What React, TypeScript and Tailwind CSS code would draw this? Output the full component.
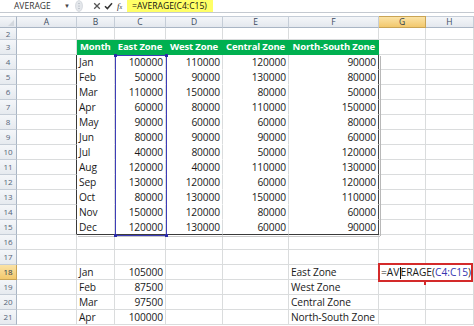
import React from "react";

const COLS = ["A", "B", "C", "D", "E", "F", "G", "H"];

const body: [string, string, string, string, string][] = [
  ["Jan", "100000", "110000", "120000", "90000"],
  ["Feb", "50000", "90000", "130000", "80000"],
  ["Mar", "110000", "150000", "80000", "50000"],
  ["Apr", "60000", "80000", "110000", "150000"],
  ["May", "90000", "60000", "60000", "80000"],
  ["Jun", "80000", "90000", "90000", "60000"],
  ["Jul", "40000", "80000", "50000", "120000"],
  ["Aug", "120000", "40000", "110000", "130000"],
  ["Sep", "130000", "120000", "60000", "120000"],
  ["Oct", "80000", "130000", "150000", "110000"],
  ["Nov", "150000", "120000", "80000", "60000"],
  ["Dec", "120000", "130000", "60000", "90000"],
];

const lower: Record<number, [string, string, string]> = {
  18: ["Jan", "105000", "East Zone"],
  19: ["Feb", "87500", "West Zone"],
  20: ["Mar", "97500", "Central Zone"],
  21: ["Apr", "100000", "North-South Zone"],
};

const headers = ["Month", "East Zone", "West Zone", "Central Zone", "North-South Zone"];

function cellClass(r: number, c: number): string {
  const inBody = r >= 4 && r <= 15 && c >= 2 && c <= 6;
  const isHead = r === 3 && c >= 2 && c <= 6;
  let cls = "flex items-center overflow-visible whitespace-nowrap border-r border-b ";
  if (isHead) {
    cls += "bg-[#00b050] border-r-[#00b050] border-b-[#00b050] text-white font-bold ";
  } else if (inBody) {
    cls += "bg-white border-r-[#dadcdd] ";
    cls += r === 15 ? "border-b-[#3a3a3a] " : "border-b-white ";
  } else {
    cls += "bg-white border-r-[#dadcdd] border-b-[#dadcdd] ";
  }
  if (r >= 4 && r <= 15 && c === 1) cls = cls.replace("border-r-[#dadcdd]", "border-r-[#3a3a3a]");
  if (r >= 4 && r <= 15 && c === 6) cls = cls.replace("border-r-[#dadcdd]", "border-r-[#4a4a4a]");
  return cls;
}

function Cell({ r, c }: { r: number; c: number }) {
  let text: string | null = null;
  let right = false;
  if (r === 3 && c >= 2 && c <= 6) {
    text = headers[c - 2];
  } else if (r >= 4 && r <= 15 && c >= 2 && c <= 6) {
    text = body[r - 4][c - 2];
    right = c !== 2;
  } else if (lower[r]) {
    if (c === 2) text = lower[r][0];
    if (c === 3) {
      text = lower[r][1];
      right = true;
    }
    if (c === 6) text = lower[r][2];
  }
  const base = cellClass(r, c);
  if (r === 3 && text) {
    const pad = c === 2 ? "pl-[3px]" : c === 6 ? "justify-end pr-[3px]" : "justify-center";
    return (
      <div className={base + pad}>
        <span className="text-[9.5px] leading-none tracking-[-0.15px]">{text}</span>
      </div>
    );
  }
  return (
    <div className={base + (right ? "justify-end pr-[2px]" : "pl-[2px]")}>
      {text && <span className="text-[10.2px] leading-none tracking-[-0.1px]">{text}</span>}
    </div>
  );
}

function RowHeader({ n }: { n: number }) {
  const active = n === 18;
  return (
    <div
      className={
        "flex items-center justify-center border-r border-b text-[8px] leading-none " +
        (active
          ? "bg-gradient-to-b from-[#fbe3a6] to-[#f2c86c] border-r-[#c9a455] border-b-[#c9a455] text-[#2c3a4c]"
          : "bg-gradient-to-b from-[#f4f6f9] to-[#e6eaef] border-r-[#a9b5c4] border-b-[#c5cdd7] text-[#546479]")
      }
    >
      {n}
    </div>
  );
}

export default function App() {
  const rows: number[] = [];
  for (let i = 2; i <= 21; i++) rows.push(i);
  return (
    <div
      className="relative w-[474px] h-[326px] overflow-hidden bg-white text-[#1a1a1a]"
      style={{ fontFamily: '"Open Sans", "Liberation Sans", sans-serif' }}
    >
      {/* formula bar */}
      <div className="flex h-[13px] items-stretch border-b border-[#c4c9d0] bg-white">
        <div className="flex w-[74px] items-center pl-[14px] text-[8.5px] leading-none text-[#333]">
          <span>AVERAGE</span>
          <span className="ml-auto mr-[4px] text-[6px] text-[#444]">▼</span>
        </div>
        <div className="flex w-[53px] items-center">
          <svg width="8" height="12" viewBox="0 0 8 12" className="ml-[1px]">
            <ellipse cx="4" cy="6" rx="3.5" ry="5.5" fill="#e4e7eb" stroke="#c9ced5" strokeWidth="0.6" />
            <circle cx="4" cy="3.5" r="0.6" fill="#9aa3ae" />
            <circle cx="4" cy="6" r="0.6" fill="#9aa3ae" />
            <circle cx="4" cy="8.5" r="0.6" fill="#9aa3ae" />
          </svg>
          <svg width="8" height="8" viewBox="0 0 8 8" className="ml-[10px]">
            <path d="M1.2 1.2 L6.8 6.8 M6.8 1.2 L1.2 6.8" stroke="#555" strokeWidth="1.3" />
          </svg>
          <svg width="9" height="8" viewBox="0 0 9 8" className="ml-[3px]">
            <path d="M1 4.2 L3.4 6.6 L8 1.2" stroke="#333" strokeWidth="1.5" fill="none" />
          </svg>
          <span
            className="ml-[4px] text-[9px] italic leading-none text-[#333]"
            style={{ fontFamily: '"Liberation Serif", serif' }}
          >
            f<span className="text-[6px]">x</span>
          </span>
        </div>
        <div className="flex w-[86px] items-center bg-[#ffff66] pl-[5px] text-[8.6px] leading-none text-[#111]">
          =AVERAGE(C4:C15)
        </div>
      </div>
      <div className="h-[3px] bg-white" />

      {/* sheet grid */}
      <div className="grid grid-cols-[17px_60px_38px_51px_57px_66px_90px_47px_48px] grid-rows-[12px_12px_repeat(19,15px)]">
        <div className="relative border-r border-b border-t border-r-[#a9b5c4] border-b-[#a9b5c4] border-t-[#c5cdd7] bg-gradient-to-b from-[#f4f6f9] to-[#e4e8ee]">
          <svg width="6" height="6" viewBox="0 0 6 6" className="absolute bottom-[1px] right-[2px]">
            <path d="M6 0 L6 6 L0 6 Z" fill="#d3d8de" />
          </svg>
        </div>
        {COLS.map((c) => (
          <div
            key={c}
            className={
              "flex items-center justify-center border-r border-b border-t text-[8.5px] leading-none " +
              (c === "G"
                ? "bg-gradient-to-b from-[#fbe3a6] to-[#f2c86c] border-r-[#c9a455] border-b-[#c9a455] border-t-[#c9a455] text-[#2c3a4c]"
                : "bg-gradient-to-b from-[#f4f6f9] to-[#e4e8ee] border-r-[#c5cdd7] border-b-[#a9b5c4] border-t-[#c5cdd7] text-[#3d4b5e]")
            }
          >
            {c}
          </div>
        ))}
        {rows.map((r) => (
          <React.Fragment key={r}>
            <RowHeader n={r} />
            {COLS.map((_, i) => (
              <Cell key={i} r={r} c={i + 1} />
            ))}
          </React.Fragment>
        ))}
      </div>

      {/* table right / bottom shadow */}
      <div className="pointer-events-none absolute left-[380px] top-[56px] h-[180px] w-[1px] bg-[#b8b8b8]" />
      <div className="pointer-events-none absolute left-[78px] top-[236px] h-[1px] w-[302px] bg-[#c8c8c8]" />

      {/* blue range highlight C4:C15 */}
      <div className="pointer-events-none absolute left-[115px] top-[55px] h-[181px] w-[52px] border border-[#3d3db8]" />
      <div className="pointer-events-none absolute left-[114px] top-[54px] h-[3px] w-[3px] bg-[#2a2aa8]" />
      <div className="pointer-events-none absolute left-[165px] top-[54px] h-[3px] w-[3px] bg-[#2a2aa8]" />
      <div className="pointer-events-none absolute left-[114px] top-[234px] h-[3px] w-[3px] bg-[#2a2aa8]" />
      <div className="pointer-events-none absolute left-[165px] top-[234px] h-[3px] w-[3px] bg-[#2a2aa8]" />

      {/* in-cell editing box G18 */}
      <div className="absolute left-[378px] top-[263px] flex h-[19px] w-[95px] items-center whitespace-nowrap border-2 border-[#d42a2a] bg-white pl-[1px] text-[10.2px] leading-none">
        <span>=AV</span>
        <span className="mx-[0.5px] h-[12px] w-[1px] bg-[#111]" />
        <span>ERAGE(</span>
        <span className="text-[#3535b0]">C4:C15</span>
        <span>)</span>
      </div>
      <div className="absolute left-[424px] top-[282px] h-[3px] w-[2px] bg-[#d42a2a]" />
    </div>
  );
}
